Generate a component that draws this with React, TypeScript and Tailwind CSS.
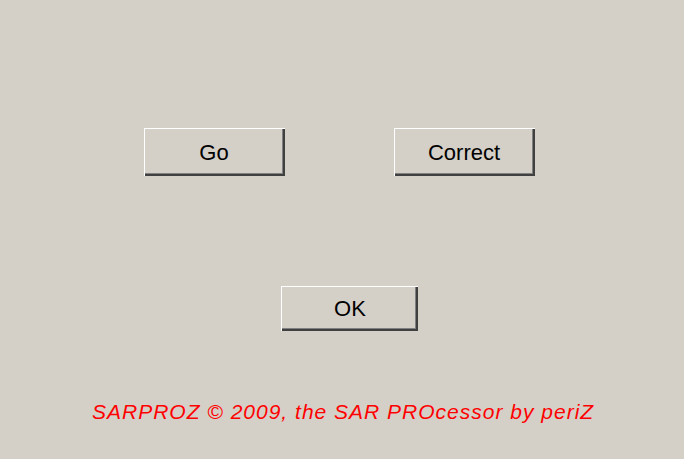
const Btn = ({ label, className }: { label: string; className?: string }) => (
  <button
    className={`flex items-center justify-center bg-[#d4d0c8] border-t border-l border-white shadow-[inset_-2px_-2px_0_#404040,inset_-3px_-3px_0_#808080] text-[22px] leading-none text-black ${className ?? ""}`}
    style={{ fontFamily: '"Liberation Sans", Arial, sans-serif' }}
  >
    {label}
  </button>
);

export default function App() {
  return (
    <div className="w-[684px] h-[459px] bg-[#d4d0c8] overflow-hidden pt-[128px]">
      <div className="flex pl-[144px] gap-[109px]">
        <Btn label="Go" className="w-[141px] h-[48px] pr-[2px]" />
        <Btn label="Correct" className="w-[141px] h-[48px] pr-[2px]" />
      </div>
      <div className="pl-[281px] mt-[110px]">
        <Btn label="OK" className="w-[137px] h-[45px]" />
      </div>
      <p
        className="mt-[70px] pl-[92px] text-[21px] leading-none italic text-[#ff0000] tracking-[1px] whitespace-nowrap"
        style={{ fontFamily: '"Liberation Sans", Arial, sans-serif' }}
      >
        SARPROZ © 2009, the SAR PROcessor by periZ
      </p>
    </div>
  );
}
